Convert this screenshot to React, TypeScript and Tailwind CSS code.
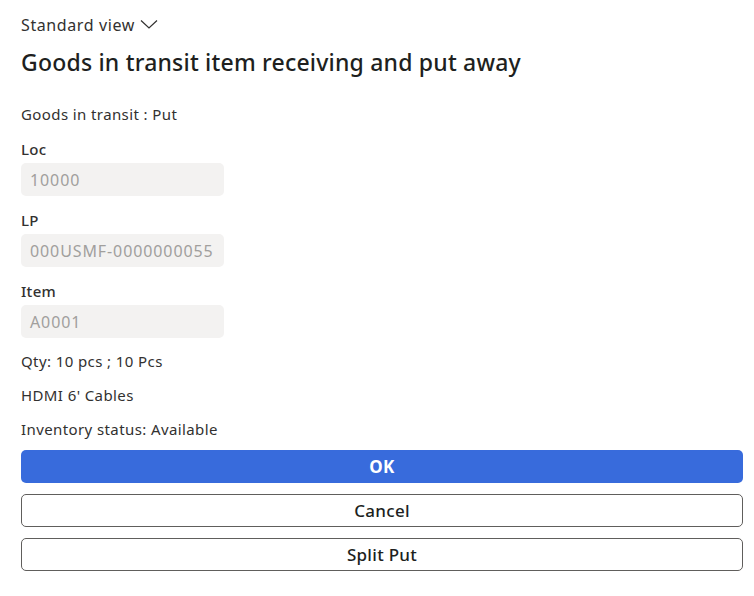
const fields = [
  { label: "Loc", value: "10000" },
  { label: "LP", value: "000USMF-0000000055" },
  { label: "Item", value: "A0001" },
];

export default function App() {
  return (
    <div
      className="h-[596px] w-[754px] bg-white pl-[21px] pr-[11px] pt-[13px] text-[#323130]"
      style={{ fontFamily: '"Noto Sans", "Open Sans", sans-serif' }}
    >
      <div className="flex items-center gap-[5px] text-[16px] leading-[24px] tracking-[0.6px]">
        <span>Standard view</span>
        <svg width="18" height="10" viewBox="0 0 18 10" fill="none" className="mt-[-2px]">
          <path d="M1 1.5 L9 9 L17 1.5" stroke="#323130" strokeWidth="1.2" />
        </svg>
      </div>
      <h1 className="mt-[10px] text-[23px] font-medium leading-[30px] tracking-[0.2px] text-[#201f1e]">
        Goods in transit item receiving and put away
      </h1>
      <p className="mt-[27px] text-[15px] leading-[20px] tracking-[0.4px]">Goods in transit : Put</p>

      <div className="mt-[15px] flex flex-col gap-[14px]">
        {fields.map((f) => (
          <div key={f.label}>
            <div className="text-[15px] font-medium leading-[20px] tracking-[0.3px]">{f.label}</div>
            <div className="mt-[4px] flex h-[33px] w-[203px] items-center rounded-[5px] bg-[#f3f2f1] px-[9px] text-[16px] tracking-[0.9px] text-[#a19f9d]">
              {f.value}
            </div>
          </div>
        ))}
      </div>

      <div className="mt-[13px] flex flex-col gap-[14px] text-[15px] leading-[20px] tracking-[0.4px]">
        <p>Qty: 10 pcs ; 10 Pcs</p>
        <p>HDMI 6' Cables</p>
        <p>Inventory status: Available</p>
      </div>

      <div className="mt-[11px] flex flex-col gap-[11px] text-[17px] tracking-[0.3px]">
        <button
          type="button"
          className="h-[33px] w-full rounded-[5px] bg-[#386bdc] font-bold text-white"
        >
          OK
        </button>
        <button
          type="button"
          className="h-[33px] w-full rounded-[5px] border border-[#605e5c] bg-white font-medium text-[#201f1e]"
        >
          Cancel
        </button>
        <button
          type="button"
          className="h-[33px] w-full rounded-[5px] border border-[#605e5c] bg-white font-medium text-[#201f1e]"
        >
          Split Put
        </button>
      </div>
    </div>
  );
}
